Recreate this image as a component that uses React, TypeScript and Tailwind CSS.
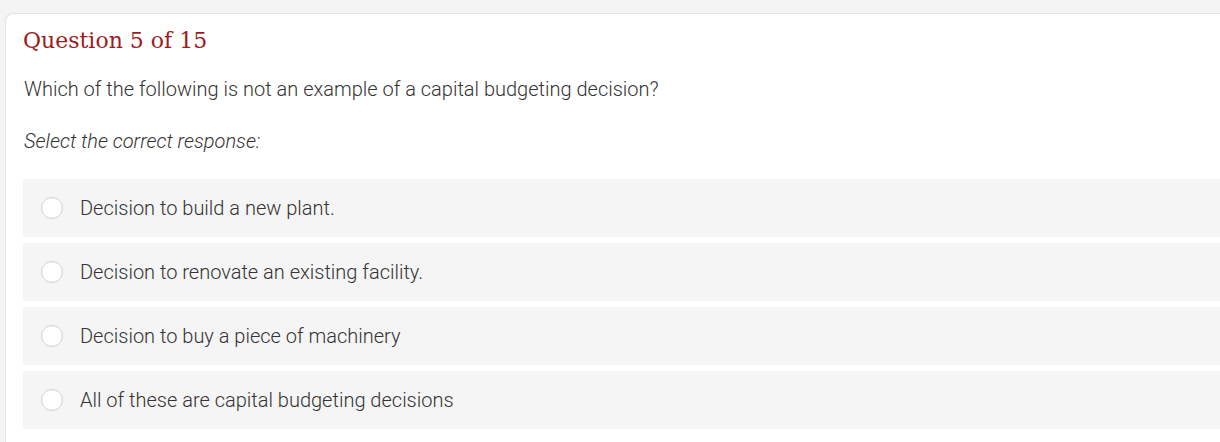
const options = [
  "Decision to build a new plant.",
  "Decision to renovate an existing facility.",
  "Decision to buy a piece of machinery",
  "All of these are capital budgeting decisions",
];

export default function App() {
  return (
    <div className="min-h-[442px] bg-[#f4f4f4] pt-[13px] pl-[5px] overflow-hidden">
      <div className="min-h-[429px] bg-white border-l border-t border-[#e2e2e2] rounded-tl-lg pl-[17px] pt-[12px] font-['Roboto',sans-serif] font-light">
        <h2 className="font-['DejaVu_Serif',serif] font-normal text-[22px] leading-[30px] text-[#9d1c1c]">
          Question 5 of 15
        </h2>
        <p className="mt-[21px] text-[20px] leading-[24px] text-[#333] pl-px">
          Which of the following is not an example of a capital budgeting decision?
        </p>
        <p className="mt-[28px] text-[20px] leading-[24px] italic text-[#333] pl-px">
          Select the correct response:
        </p>
        <div className="mt-[26px] flex flex-col gap-[6px]">
          {options.map(o => (
            <label key={o} className="flex items-center h-[58px] bg-[#f5f5f5] pl-[18px]">
              <span className="w-[22px] h-[22px] rounded-full bg-white border border-[#cfcfcf] shrink-0" />
              <span className="ml-[17px] text-[20px] text-[#333]">{o}</span>
            </label>
          ))}
        </div>
      </div>
    </div>
  );
}
